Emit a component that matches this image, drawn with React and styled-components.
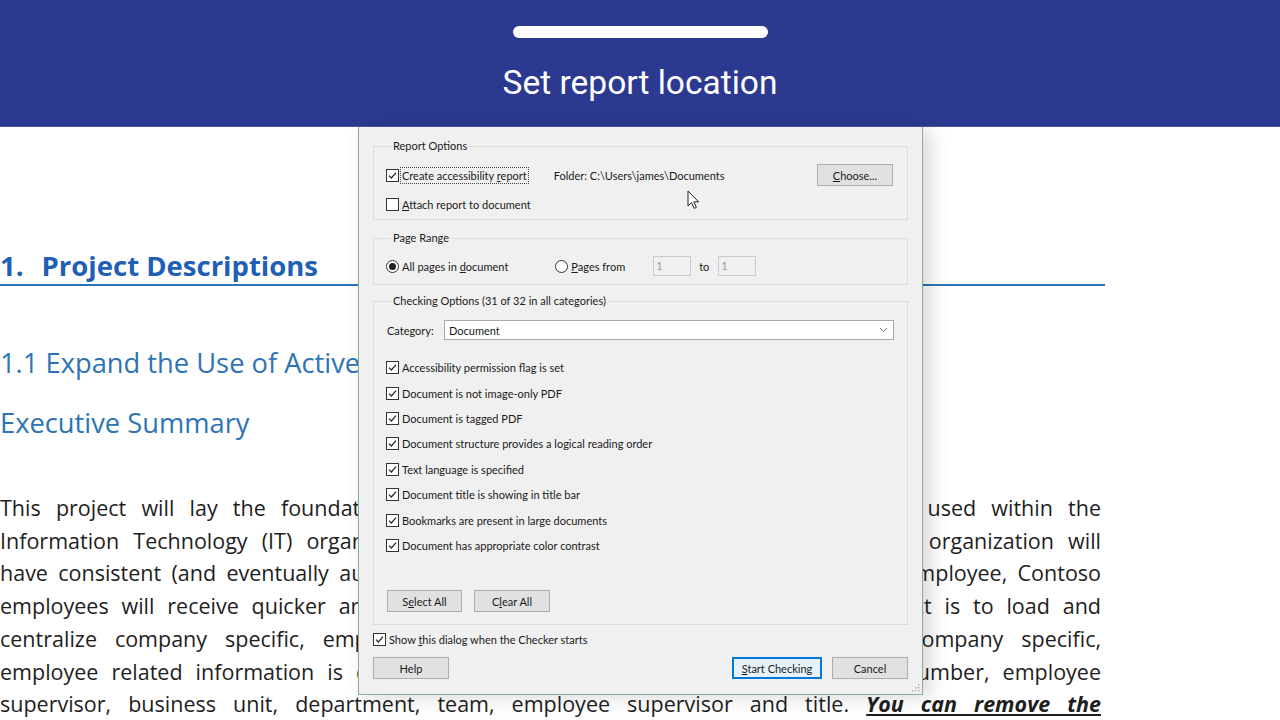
import React from 'react';
import styled, { createGlobalStyle } from 'styled-components';

const GlobalStyle = createGlobalStyle`
  html, body {
    margin: 0;
    padding: 0;
    background: #ffffff;
  }
  body {
    width: 1280px;
    height: 720px;
    overflow: hidden;
  }
`;

const Screen = styled.div`
  position: relative;
  width: 1280px;
  height: 720px;
  overflow: hidden;
  background: #ffffff;
`;

const Banner = styled.header`
  height: 127px;
  background: #2b3990;
  display: flex;
  flex-direction: column;
  align-items: center;
  padding-top: 26px;
  box-sizing: border-box;
  border-bottom: 1px solid #4a57a3;
`;

const Pill = styled.div`
  width: 255px;
  height: 12px;
  border-radius: 6px;
  background: #ffffff;
`;

const BannerTitle = styled.h1`
  margin: 25px 0 0;
  font-family: Roboto, "Noto Sans", sans-serif;
  font-weight: 400;
  font-size: 33.5px;
  line-height: 40px;
  color: #ffffff;
`;

/* ---------- document behind the dialog ---------- */

const Doc = styled.main`
  width: 1105px;
  padding-top: 121px;
  font-family: "Open Sans", "Noto Sans", sans-serif;
`;

const Heading1 = styled.h2`
  margin: 0;
  padding-bottom: 1px;
  border-bottom: 2px solid #2e74b5;
  font-size: 27.5px;
  line-height: 35px;
  font-weight: 700;
  color: #1f5fb4;
  display: flex;
  gap: 18px;
`;

const Heading2 = styled.h3`
  margin: ${p => p.$top}px 0 0;
  font-size: 27.3px;
  line-height: 36px;
  font-weight: 400;
  color: #2e74b5;
`;

const Para = styled.div`
  margin-top: 51px;
  width: 1101px;
  font-size: 21.5px;
  line-height: 32.7px;
  color: #1e1e1e;
`;

const Line = styled.div`
  text-align: justify;
  text-align-last: justify;
  white-space: nowrap;
`;

const Emph = styled.span`
  font-weight: 700;
  font-style: italic;
  text-decoration: underline;
`;

/* ---------- dialog ---------- */

const Dialog = styled.section`
  position: absolute;
  left: 358px;
  top: 127px;
  width: 565px;
  height: 568px;
  box-sizing: border-box;
  background: #f0f0f0;
  border: 1px solid #86ad97;
  border-top: none;
  box-shadow: 7px 2px 18px rgba(0, 0, 0, 0.16);
  padding: 12px 14px 0 14px;
  font-family: Lato, "Noto Sans", sans-serif;
  font-size: 11px;
  color: #1a1a1a;
  display: flex;
  flex-direction: column;
`;

const Group = styled.fieldset`
  margin: ${p => p.$top || 0}px 0 0;
  padding: ${p => p.$pad};
  border: 1px solid #dcdcdc;
  border-radius: 0;
  min-width: 0;
  display: flex;
  flex-direction: column;
`;

const Legend = styled.legend`
  padding: 0 2px;
  margin-left: 5px;
  line-height: 14px;
`;

const Row = styled.div`
  display: flex;
  align-items: center;
  height: ${p => p.$h ?? 22}px;
  margin-top: ${p => p.$mt ?? 0}px;
`;

const Box = styled.span`
  width: 11px;
  height: 11px;
  border: 1px solid #333333;
  background: #ffffff;
  display: inline-flex;
  align-items: center;
  justify-content: center;
  flex: none;
  margin-right: 2px;
`;

const Radio = styled.span`
  width: 11px;
  height: 11px;
  border: 1px solid #333333;
  border-radius: 50%;
  background: #ffffff;
  display: inline-flex;
  align-items: center;
  justify-content: center;
  flex: none;
  margin-right: 2px;

  &::after {
    content: '';
    width: 7px;
    height: 7px;
    border-radius: 50%;
    background: ${p => (p.$on ? '#222222' : 'transparent')};
  }
`;

const Label = styled.span`
  white-space: nowrap;
  padding: 1px 1px;
  outline: ${p => (p.$focus ? '1px dotted #444' : 'none')};
`;

const Spacer = styled.span`
  width: ${p => p.$w}px;
  flex: none;
`;

const Button = styled.button`
  width: ${p => p.$w || 76}px;
  height: 22px;
  flex: none;
  padding: 0;
  margin-left: ${p => p.$ml || 0}px;
  font-family: inherit;
  font-size: 11px;
  color: #1a1a1a;
  background: ${p => (p.$primary ? '#e5f1fb' : '#e1e1e1')};
  border: 1px solid ${p => (p.$primary ? '#0078d7' : '#adadad')};
  box-shadow: ${p => (p.$primary ? 'inset 0 0 0 1px #0078d7' : 'none')};
`;

const SmallInput = styled.span`
  width: 34px;
  height: 18px;
  border: 1px solid #cccccc;
  background: #f0f0f0;
  color: #9a9a9a;
  line-height: 18px;
  padding-left: 2px;
  flex: none;
`;

const Select = styled.div`
  margin-left: auto;
  width: 450px;
  height: 20px;
  box-sizing: border-box;
  border: 1px solid #a9a9a9;
  background: #ffffff;
  display: flex;
  align-items: center;
  justify-content: space-between;
  padding: 0 5px 0 4px;
`;

const Footer = styled.div`
  display: flex;
  align-items: center;
  height: 22px;
  margin-top: 10px;
`;

const Grip = styled.svg`
  position: absolute;
  right: 2px;
  bottom: 2px;
`;

const Cursor = styled.svg`
  position: absolute;
  left: 687px;
  top: 190px;
`;

const Check = () => (
  <Box>
    <svg width="9" height="9" viewBox="0 0 9 9">
      <path d="M1 4.6 L3.4 7 L8 1.6" fill="none" stroke="#222" strokeWidth="1.2" />
    </svg>
  </Box>
);

const checks = [
  'Accessibility permission flag is set',
  'Document is not image-only PDF',
  'Document is tagged PDF',
  'Document structure provides a logical reading order',
  'Text language is specified',
  'Document title is showing in title bar',
  'Bookmarks are present in large documents',
  'Document has appropriate color contrast',
];

export default function App() {
  return (
    <Screen>
      <GlobalStyle />
      <Banner>
        <Pill />
        <BannerTitle>Set report location</BannerTitle>
      </Banner>

      <Doc>
        <Heading1>
          <span>1.</span>
          <span>Project Descriptions</span>
        </Heading1>
        <Heading2 $top={59}>1.1 Expand the Use of Active Directory</Heading2>
        <Heading2 $top={24}>Executive Summary</Heading2>
        <Para>
          <Line>This project will lay the foundation for a standard set of user data that will be used within the</Line>
          <Line>Information Technology (IT) organization. Through the use of standard data, the IT organization will</Line>
          <Line>have consistent (and eventually automated) processes for data. As a result, for each employee, Contoso</Line>
          <Line>employees will receive quicker and more accurate IT service. The goal of this project is to load and</Line>
          <Line>centralize company specific, employee related information. In this context, the company specific,</Line>
          <Line>employee related information is collected, such as the employee name, employee number, employee</Line>
          <Line>
            supervisor, business unit, department, team, employee supervisor and title.{' '}
            <Emph>You can remove the</Emph>
          </Line>
        </Para>
      </Doc>

      <Dialog>
        <Group $pad="11px 14px 4px 12px">
          <Legend>Report Options</Legend>
          <Row>
            <Check />
            <Label $focus>Create accessibility <u>r</u>eport</Label>
            <Spacer $w={25} />
            <Label>Folder: C:\Users\james\Documents</Label>
            <Button style={{ marginLeft: 'auto' }}>
              <u>C</u>hoose...
            </Button>
          </Row>
          <Row $mt={7}>
            <Box />
            <Label><u>A</u>ttach report to document</Label>
          </Row>
        </Group>

        <Group $top={11} $pad="10px 14px 7px 12px">
          <Legend>Page Range</Legend>
          <Row>
            <Radio $on />
            <Label>All pages in <u>d</u>ocument</Label>
            <Spacer $w={46} />
            <Radio />
            <Label><u>P</u>ages from</Label>
            <Spacer $w={27} />
            <SmallInput>1</SmallInput>
            <Spacer $w={8} />
            <span>to</span>
            <Spacer $w={9} />
            <SmallInput>1</SmallInput>
          </Row>
        </Group>

        <Group $top={9} $pad="11px 13px 12px 12px">
          <Legend>Checking Options (31 of 32 in all categories)</Legend>
          <Row>
            <Label>Cate<u>g</u>ory:</Label>
            <Select>
              <span>Document</span>
              <svg width="9" height="6" viewBox="0 0 9 6">
                <path d="M1 1 L4.5 4.5 L8 1" fill="none" stroke="#777" strokeWidth="1" />
              </svg>
            </Select>
          </Row>
          {checks.map((text, i) => (
            <Row key={text} $h={25.4} $mt={i === 0 ? 14 : 0}>
              <Check />
              <Label>{text}</Label>
            </Row>
          ))}
          <Row $mt={32}>
            <Button $w={75} style={{ marginLeft: 1 }}>
              S<u>e</u>lect All
            </Button>
            <Button $ml={12}>
              C<u>l</u>ear All
            </Button>
          </Row>
        </Group>

        <Row $h={16} $mt={6}>
          <Check />
          <Label>Show <u>t</u>his dialog when the Checker starts</Label>
        </Row>

        <Footer>
          <Button>Help</Button>
          <Button $primary $w={90} style={{ marginLeft: 'auto' }}>
            <u>S</u>tart Checking
          </Button>
          <Button $ml={10}>Cancel</Button>
        </Footer>

        <Grip width="8" height="8" viewBox="0 0 8 8">
          <g fill="#b5b5b5">
            <rect x="6" y="0" width="1.5" height="1.5" />
            <rect x="3" y="3" width="1.5" height="1.5" />
            <rect x="6" y="3" width="1.5" height="1.5" />
            <rect x="0" y="6" width="1.5" height="1.5" />
            <rect x="3" y="6" width="1.5" height="1.5" />
            <rect x="6" y="6" width="1.5" height="1.5" />
          </g>
        </Grip>
      </Dialog>

      <Cursor width="13" height="20" viewBox="0 0 13 20">
        <path d="M1 1 L1 16 L4.6 12.6 L7.2 18.4 L9.4 17.4 L6.9 11.8 L11.6 11.8 Z" fill="#ffffff" stroke="#222" strokeWidth="1" strokeLinejoin="round" />
      </Cursor>
    </Screen>
  );
}
